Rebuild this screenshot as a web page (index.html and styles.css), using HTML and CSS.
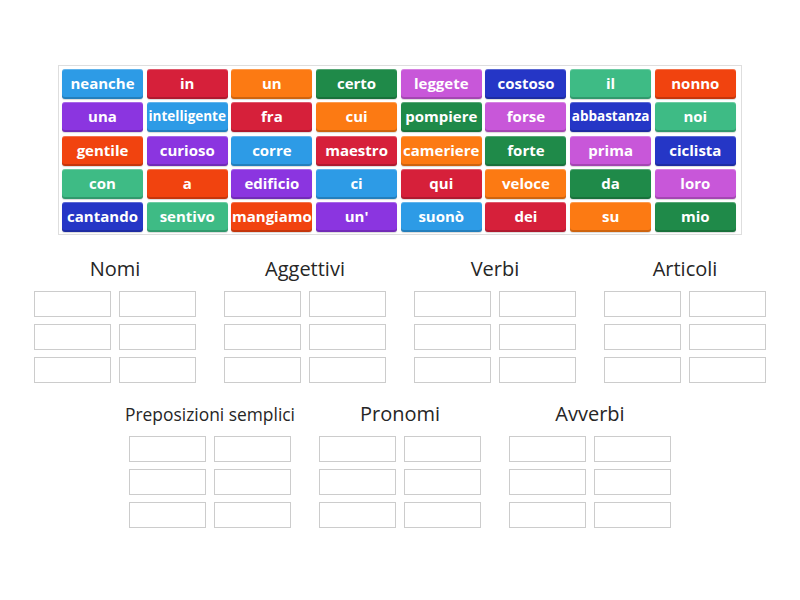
FILE: index.html
```html
<!DOCTYPE html>
<html lang="it">
  <head>
    <meta charset="UTF-8" />
    <meta name="viewport" content="width=device-width, initial-scale=1.0" />
    <title>Raggruppa le parole</title>
    <link rel="stylesheet" href="styles.css">
  </head>
  <body>
    <section class="bank">
      <span class="tile blue">neanche</span>
      <span class="tile crimson">in</span>
      <span class="tile orange">un</span>
      <span class="tile green">certo</span>
      <span class="tile pink">leggete</span>
      <span class="tile navy">costoso</span>
      <span class="tile mint">il</span>
      <span class="tile red">nonno</span>

      <span class="tile purple">una</span>
      <span class="tile blue fit">intelligente</span>
      <span class="tile crimson">fra</span>
      <span class="tile orange">cui</span>
      <span class="tile green">pompiere</span>
      <span class="tile pink">forse</span>
      <span class="tile navy fit">abbastanza</span>
      <span class="tile mint">noi</span>

      <span class="tile red">gentile</span>
      <span class="tile purple">curioso</span>
      <span class="tile blue">corre</span>
      <span class="tile crimson">maestro</span>
      <span class="tile orange">cameriere</span>
      <span class="tile green">forte</span>
      <span class="tile pink">prima</span>
      <span class="tile navy">ciclista</span>

      <span class="tile mint">con</span>
      <span class="tile red">a</span>
      <span class="tile purple">edificio</span>
      <span class="tile blue">ci</span>
      <span class="tile crimson">qui</span>
      <span class="tile orange">veloce</span>
      <span class="tile green">da</span>
      <span class="tile pink">loro</span>

      <span class="tile navy">cantando</span>
      <span class="tile mint">sentivo</span>
      <span class="tile red">mangiamo</span>
      <span class="tile purple">un'</span>
      <span class="tile blue">suonò</span>
      <span class="tile crimson">dei</span>
      <span class="tile orange">su</span>
      <span class="tile green">mio</span>
    </section>

    <section class="groups first">
      <div class="group">
        <h2>Nomi</h2>
        <div class="slots">
          <div></div><div></div><div></div><div></div><div></div><div></div>
        </div>
      </div>
      <div class="group">
        <h2>Aggettivi</h2>
        <div class="slots">
          <div></div><div></div><div></div><div></div><div></div><div></div>
        </div>
      </div>
      <div class="group">
        <h2>Verbi</h2>
        <div class="slots">
          <div></div><div></div><div></div><div></div><div></div><div></div>
        </div>
      </div>
      <div class="group">
        <h2>Articoli</h2>
        <div class="slots">
          <div></div><div></div><div></div><div></div><div></div><div></div>
        </div>
      </div>
    </section>

    <section class="groups second">
      <div class="group">
        <h2 class="small">Preposizioni semplici</h2>
        <div class="slots">
          <div></div><div></div><div></div><div></div><div></div><div></div>
        </div>
      </div>
      <div class="group">
        <h2>Pronomi</h2>
        <div class="slots">
          <div></div><div></div><div></div><div></div><div></div><div></div>
        </div>
      </div>
      <div class="group">
        <h2>Avverbi</h2>
        <div class="slots">
          <div></div><div></div><div></div><div></div><div></div><div></div>
        </div>
      </div>
    </section>
  </body>
</html>
```

FILE: styles.css
```css
* {
  margin: 0;
  padding: 0;
  box-sizing: border-box;
}
body {
  background: #fff;
  font-family: "Open Sans", "Liberation Sans", sans-serif;
  color: #333;
}
.bank {
  width: 684px;
  margin: 65px 0 0 58px;
  padding: 3px 4px 2px 3px;
  border: 1px solid #dedede;
  display: grid;
  grid-template-columns: repeat(8, 81px);
  grid-auto-rows: 30px;
  column-gap: 3.7px;
  row-gap: 3.3px;
}
.tile {
  display: flex;
  align-items: center;
  justify-content: center;
  padding-bottom: 2px;
  border-radius: 3px;
  color: #fff;
  font-weight: 700;
  font-size: 15px;
  white-space: nowrap;
  overflow: hidden;
  box-shadow: inset 0 1px 0 rgba(255, 255, 255, 0.25),
    inset 0 -2px 0 rgba(0, 0, 0, 0.18), 0 1px 1px rgba(0, 0, 0, 0.15);
}
.tile.fit {
  font-size: 13.5px;
}
.blue {
  background: #2d9be6;
}
.crimson {
  background: #d6203a;
}
.orange {
  background: #fc7a13;
}
.green {
  background: #1f8a49;
}
.pink {
  background: #c857d9;
}
.navy {
  background: #2536c6;
}
.mint {
  background: #3ebb85;
}
.red {
  background: #f1430f;
}
.purple {
  background: #8b35e0;
}
.groups {
  display: flex;
  justify-content: center;
  gap: 28px;
}
.groups.first {
  margin-top: 22px;
}
.groups.second {
  margin-top: 19px;
}
.group {
  width: 162px;
}
.group h2 {
  display: flex;
  justify-content: center;
  height: 24px;
  margin-bottom: 10px;
  font-size: 20px;
  line-height: 24px;
  font-weight: 400;
  white-space: nowrap;
  color: #262626;
}
.group h2.small {
  font-size: 17.4px;
}
.slots {
  display: grid;
  grid-template-columns: 77px 77px;
  grid-auto-rows: 26px;
  column-gap: 8px;
  row-gap: 7px;
}
.slots div {
  border: 1px solid #cccccc;
  background: #fff;
}
```
